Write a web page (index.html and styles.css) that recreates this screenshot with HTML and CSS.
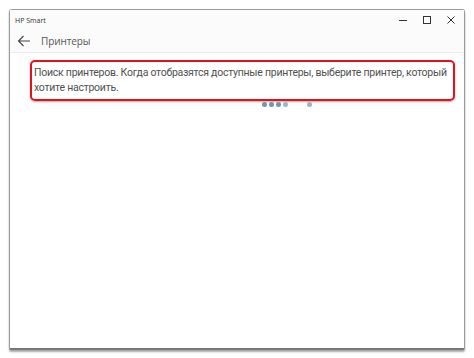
FILE: index.html
```html
<!DOCTYPE html>
<html lang="ru">
<head>
<meta charset="utf-8">
<link rel="stylesheet" href="styles.css">
</head>
<body>
<div class="window">
  <div class="titlebar">
    <span class="app-title">HP Smart</span>
    <div class="controls">
      <span class="ctl"><svg width="10" height="10" viewBox="0 0 10 10"><path d="M1 5.5h8" stroke="#333" stroke-width="1"/></svg></span>
      <span class="ctl"><svg width="10" height="10" viewBox="0 0 10 10"><rect x="1.5" y="1.5" width="7" height="7" fill="none" stroke="#333" stroke-width="1"/></svg></span>
      <span class="ctl"><svg width="10" height="10" viewBox="0 0 10 10"><path d="M1.5 1.5l7 7M8.5 1.5l-7 7" stroke="#333" stroke-width="1"/></svg></span>
    </div>
  </div>
  <div class="navbar">
    <svg class="back" width="14" height="12" viewBox="0 0 14 12"><path d="M13 6H1.5M6.5 1L1.5 6l5 5" fill="none" stroke="#444" stroke-width="1.1"/></svg>
    <span class="nav-title">Принтеры</span>
  </div>
  <div class="content">
    <div class="message">Поиск принтеров. Когда отобразятся доступные принтеры, выберите принтер, который хотите настроить.</div>
    <div class="dots">
      <span class="dot"></span><span class="dot"></span><span class="dot"></span><span class="dot light"></span><span class="dot light far"></span>
    </div>
  </div>
</div>
</body>
</html>
```
FILE: styles.css
```css
html, body {
  margin: 0;
  padding: 0;
  background: #ffffff;
}
body {
  width: 474px;
  height: 358px;
  font-family: "Open Sans", "Noto Sans", sans-serif;
}
.window {
  position: relative;
  margin: 9px 0 0 9px;
  width: 454px;
  height: 338px;
  border: 1px solid #9a9a9a;
  border-bottom: 2px solid #777;
  border-radius: 3px 3px 2px 2px;
  box-shadow: 0 2px 2px rgba(0,0,0,0.35);
  background: #fff;
  display: flex;
  flex-direction: column;
}
.titlebar {
  height: 20px;
  display: flex;
  align-items: center;
  justify-content: space-between;
  background: #fbfbfb;
}
.app-title {
  font-size: 7px;
  color: #333;
  padding-left: 5px;
  padding-top: 1px;
}
.controls {
  display: flex;
  align-items: center;
  gap: 14px;
  padding-right: 8px;
}
.ctl {
  width: 10px;
  height: 10px;
  display: flex;
}
.navbar {
  height: 22px;
  display: flex;
  align-items: center;
  background: #fbfbfb;
  border-bottom: 1px solid #ebebeb;
}
.back {
  margin-left: 7px;
  margin-right: 10px;
}
.nav-title {
  font-size: 10px;
  color: #555;
  letter-spacing: -0.1px;
}
.content {
  flex: 1;
  display: flex;
  flex-direction: column;
  padding: 7px 9px 0 20px;
}
.message {
  border: 2px solid #e0121b;
  border-radius: 5px;
  box-shadow: 0 1px 2px rgba(120,0,0,0.35);
  padding: 3px 3px 4px 2px;
  font-family: Roboto, "Noto Sans", sans-serif;
  font-size: 10.5px;
  line-height: 15px;
  color: #505050;
  letter-spacing: -0.25px;
}
.dots {
  display: flex;
  align-items: center;
  gap: 2.5px;
  margin: 1px 0 0 232px;
}
.dot {
  width: 4.5px;
  height: 4.5px;
  border-radius: 50%;
  background: #7096b4;
}
.dot.light {
  background: #9db5c8;
}
.dot.far {
  margin-left: 17px;
}
```
